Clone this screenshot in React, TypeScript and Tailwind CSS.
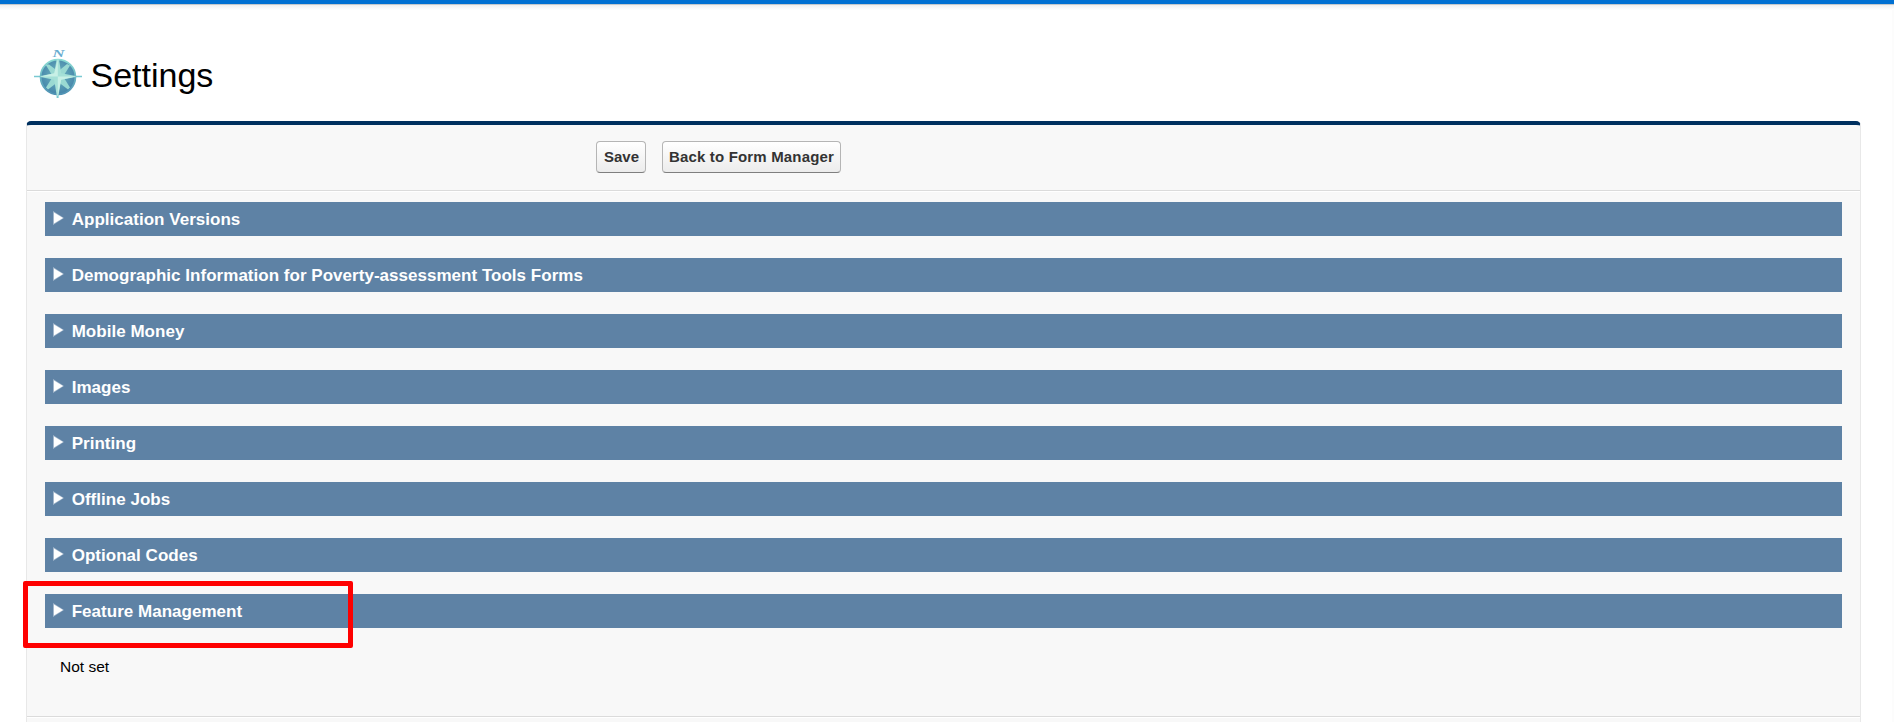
const sections = [
  'Application Versions',
  'Demographic Information for Poverty-assessment Tools Forms',
  'Mobile Money',
  'Images',
  'Printing',
  'Offline Jobs',
  'Optional Codes',
  'Feature Management',
];

const CompassIcon = () => {
  return (
    <svg className="h-[54px] w-12 shrink-0" viewBox="0 -6 48 54">
      <defs>
        <radialGradient id="dial" cx="50%" cy="45%" r="55%">
          <stop offset="0" stopColor="#6fb5c0" />
          <stop offset="1" stopColor="#4585aa" />
        </radialGradient>
        <linearGradient id="rim" x1="0" y1="0" x2="0" y2="1">
          <stop offset="0" stopColor="#8adbd3" />
          <stop offset="1" stopColor="#4f92b4" />
        </linearGradient>
      </defs>
      <path d="M0 25.7 H48 V27.2 H0Z" fill="#79c9d2" />
      <path d="M22.6 26 V48 H24.6 V26Z" fill="#79c9d2" />
      <circle cx="24" cy="27" r="17.4" fill="url(#dial)" stroke="url(#rim)" strokeWidth="1.8" />
      <g fill="#9ad9d2">
        <path d="M11.5 14.5 L15 14.5 L27 23.5 L20.5 29Z" />
        <path d="M33 14 L36 15.5 L27.5 29 L21 24Z" />
        <path d="M12 37.5 L14 39.5 L27 29.5 L20.5 24Z" />
        <path d="M34 39.5 L36 37.5 L27.5 24 L21 29.5Z" />
      </g>
      <path d="M22.6 9.5 H25 L27.2 23.2 L41.5 26 V27 L27.2 29.8 L24.4 46 H22.8 L20.2 29.8 L6.5 27 V26 L20.2 23.2Z" fill="#a5e0d7" />
      <path d="M23.8 9.5 V26.4 H41.5 L27.2 29.8 L23.8 46 V26.4 H6.5 L20.2 23.2Z" fill="#c8f0e6" />
      <text
        x="18.5"
        y="7"
        fontFamily="Liberation Serif, serif"
        fontSize="10"
        fontWeight="bold"
        fontStyle="italic"
        textLength="12"
        lengthAdjust="spacingAndGlyphs"
        fill="#68acd0"
      >
        N
      </text>
    </svg>
  );
};

const ToolbarButton = ({ label, className }: { label: string; className: string }) => {
  return (
    <button
      className={`h-8 rounded-[4px] border border-[#b5b5b5] border-b-[#7f7f7f] bg-gradient-to-b from-white to-[#ececec] pb-px text-center text-[15px] font-bold leading-[28px] text-[#333] whitespace-nowrap ${className}`}
    >
      {label}
    </button>
  );
};

const SectionHeader = ({ title }: { title: string }) => {
  return (
    <div className="flex h-[34px] items-center bg-[#5e82a5] pl-2">
      <svg className="mb-0.5 mr-[7.7px] h-[14px] w-[11px] shrink-0" viewBox="0 0 11 14">
        <path d="M0 0 L11 7 L0 14Z" fill="#a3b7cc" />
        <path d="M1 1.5 L10 7 L1 12.5Z" fill="#fff" />
      </svg>
      <h3 className="pt-0.5 text-[17px] font-bold leading-8 tracking-[0.025px] text-white">{title}</h3>
    </div>
  );
};

const App = () => {
  return (
    <div className="h-[722px] overflow-hidden bg-white font-['Liberation_Sans',Arial,sans-serif] text-black">
      <div className="h-1 bg-[#0070d2]" />
      <div className="h-px bg-[#c4c8cb]" />
      <div className="h-[5px] bg-gradient-to-b from-[#f0f0f0] to-white" />

      <div className="border-r-2 border-[#fcfcfc]">
        <header className="flex h-[111px] pl-[34px] pt-[34px]">
          <CompassIcon />
          <h1 className="ml-[8.5px] mt-[9px] text-[34px] leading-[44px]">Settings</h1>
        </header>

        <main className="ml-[26px] h-[620px] w-[1835px] rounded-t-[5px] border-x border-t-4 border-x-[#e8e8e8] border-t-[#00305f] bg-[#f8f8f8]">
          <div className="flex h-[66px] gap-4 border-b border-[#dbdbdb] pl-[569px] pt-4">
            <ToolbarButton label="Save" className="w-[50px] pl-px" />
            <ToolbarButton label="Back to Form Manager" className="w-[179px] tracking-[0.17px]" />
          </div>

          <div className="flex h-[526px] flex-col gap-[22px] border-b border-t border-b-[#dbdbdb] border-t-white px-[18px] pt-[10px]">
            {sections.map((title) => (
              <div key={title} className="relative">
                <SectionHeader title={title} />
                {title === 'Feature Management' && (
                  <div className="absolute -left-[22px] -top-[13px] h-[67px] w-[330px] rounded-[2px] border-[5px] border-[#fe0000]" />
                )}
              </div>
            ))}
            <p className="pl-[15px] pt-[5px] text-[15.5px] leading-6">Not set</p>
          </div>
          <div className="h-px bg-white" />
        </main>
      </div>
    </div>
  );
};

export default App;
